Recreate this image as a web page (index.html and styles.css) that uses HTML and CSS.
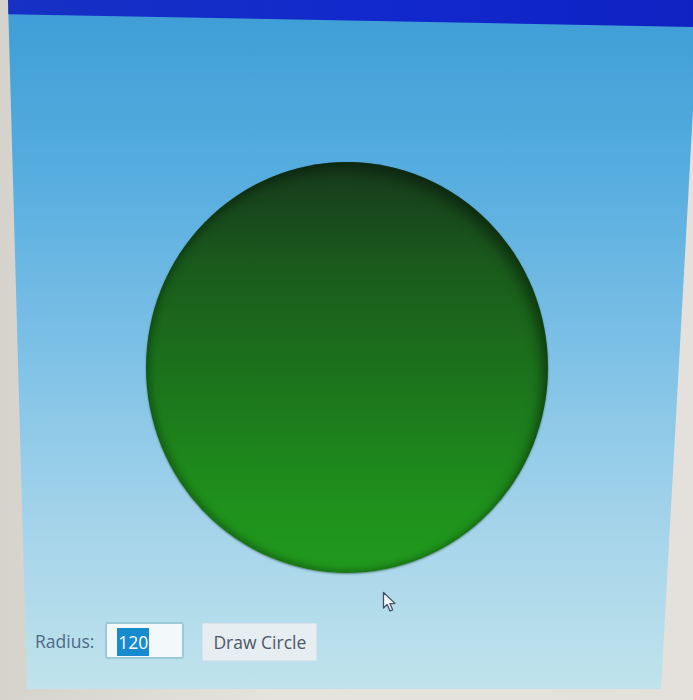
FILE: index.html
```html
<!DOCTYPE html>
<html>
<head>
<meta charset="utf-8">
<link rel="stylesheet" href="styles.css">
</head>
<body>
<div class="screen">
  <div class="window">
    <div class="titlebar">
      <div class="titlefill"></div>
    </div>
    <div class="content">
      <div class="circle"></div>
      <div class="controls">
        <span class="label">Radius:</span>
        <div class="input"><span class="sel">120</span></div>
        <div class="button">Draw Circle</div>
      </div>
    </div>
  </div>
  <svg class="cursor" width="16" height="22" viewBox="0 0 16 22">
    <path d="M1.5 1.5 L1.5 17 L5.2 13.6 L8 20 L10.6 18.8 L7.9 12.6 L13 12.4 Z" fill="#f4f8fa" stroke="#3f4f66" stroke-width="1.3" stroke-linejoin="round"/>
  </svg>
</div>
</body>
</html>
```
FILE: styles.css
```css
html, body {
  margin: 0;
  padding: 0;
}
body {
  background: #dfdcd6;
  font-family: "Open Sans", "Noto Sans", sans-serif;
}
.screen {
  position: relative;
  width: 693px;
  height: 700px;
  overflow: hidden;
  background: linear-gradient(90deg, #d6d3cd 0%, #e6e3de 40%, #e4e1dc 100%);
}
.window {
  width: 693px;
  height: 689px;
  display: flex;
  flex-direction: column;
  background: linear-gradient(180deg, #3d9dd6 0%, #56addf 25%, #7cc0e6 50%, #a3d3ea 75%, #c0e3ec 100%);
  clip-path: polygon(8px 0, 693px 0, 693px 110px, 661px 689px, 27px 689px);
}
.titlebar {
  position: relative;
  height: 28px;
  flex: none;
}
.titlefill {
  height: 28px;
  background: linear-gradient(90deg, #1631c4 0%, #1128cc 60%, #0f22c2 100%);
  clip-path: polygon(0 0, 100% 0, 100% 27px, 0 14px);
}
.content {
  flex: 1;
  display: flex;
  flex-direction: column;
}
.circle {
  width: 402px;
  height: 411px;
  margin: 134px 0 0 146px;
  border-radius: 50%;
  background: linear-gradient(180deg, #17391c 0%, #1a5a1c 25%, #1c761c 55%, #1f921c 85%, #21991d 100%);
  box-shadow: inset -6px 8px 12px rgba(5, 25, 10, 0.55), inset 4px -3px 6px rgba(10, 50, 10, 0.35), 0 1px 2px rgba(20, 50, 30, 0.5);
}
.controls {
  display: flex;
  align-items: center;
  margin-top: 47px;
  padding-left: 35px;
}
.label {
  font-size: 17.5px;
  color: #4d6a86;
}
.input {
  box-sizing: border-box;
  width: 79px;
  height: 37px;
  margin-left: 11px;
  padding: 2px 0 0 10px;
  background: #f3f9fb;
  border: 2px solid #9cc9d8;
  border-radius: 3px;
  display: flex;
  align-items: center;
}
.sel {
  background: #178bcd;
  color: #ffffff;
  font-size: 17.5px;
  line-height: 28px;
  padding: 0 1px;
}
.button {
  box-sizing: border-box;
  width: 115px;
  height: 38px;
  margin-left: 18px;
  margin-top: 3px;
  display: flex;
  align-items: center;
  justify-content: center;
  font-size: 17.5px;
  color: #4e5668;
  background: #e6eef1;
  border: 1px solid #d8e4e8;
  border-radius: 2px;
}
.cursor {
  position: absolute;
  left: 382px;
  top: 591px;
}
```
